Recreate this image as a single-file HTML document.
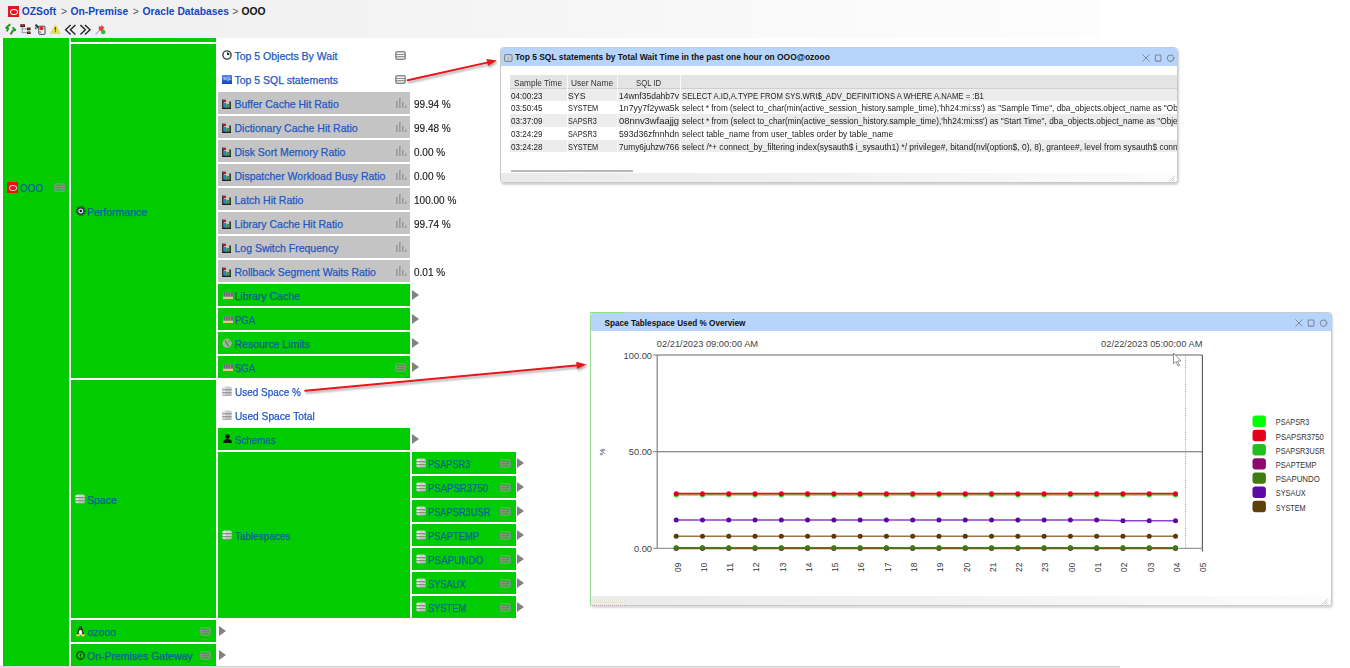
<!DOCTYPE html><html><head><meta charset="utf-8"><style>
*{margin:0;padding:0;box-sizing:border-box}
html,body{width:1350px;height:668px;overflow:hidden;background:#fff;font-family:"Liberation Sans",sans-serif}
.a{position:absolute}
.bc{font-size:10.3px;font-weight:bold;color:#1a45b5;white-space:nowrap;line-height:14px}
.sep{color:#555;font-weight:normal}
.g{background:#00cc00}
.gr{background:#c4c4c4}
.t{position:absolute;font-size:10.5px;color:#2159c4;-webkit-text-stroke:0.25px #2159c4;white-space:nowrap;line-height:22px;margin-top:1px}
.tg{position:absolute;font-size:10.5px;color:#0c6296;-webkit-text-stroke:0.25px #0c6296;white-space:nowrap;line-height:22px;margin-top:1px}
.v{position:absolute;font-size:10.5px;color:#1a1a1a;-webkit-text-stroke:0.15px #1a1a1a;white-space:nowrap;line-height:22px;margin-top:1px}
.tri{position:absolute;width:0;height:0;border-top:5.15px solid transparent;border-bottom:5.15px solid transparent;border-left:7.4px solid #828282}
svg{position:absolute;overflow:visible}
</style></head><body>
<div class="a" style="left:0;top:0;width:1102px;height:38px;background:linear-gradient(90deg,#efefef 0%,#f3f3f3 35%,#fafafa 75%,#fdfdfd 100%)"></div>
<div class="a" style="left:8px;top:6px;width:11px;height:11px;background:#e3141c"></div>
<div class="a" style="left:9.5px;top:8.5px;width:8px;height:6px;border:1.3px solid #fff;border-radius:50%"></div>
<div class="a bc" style="left:21.8px;top:4.5px;color:#1546c0;font-weight:bold">OZSoft</div>
<div class="a bc" style="left:61px;top:4.5px;color:#555;font-weight:normal">&gt;</div>
<div class="a bc" style="left:70.5px;top:4.5px;color:#1546c0;font-weight:bold">On-Premise</div>
<div class="a bc" style="left:132.8px;top:4.5px;color:#555;font-weight:normal">&gt;</div>
<div class="a bc" style="left:142.5px;top:4.5px;color:#1546c0;font-weight:bold">Oracle Databases</div>
<div class="a bc" style="left:232.2px;top:4.5px;color:#555;font-weight:normal">&gt;</div>
<div class="a bc" style="left:241.4px;top:4.5px;color:#111;font-weight:bold">OOO</div>
<svg style="left:0;top:0" width="120" height="40" viewBox="0 0 120 40"><path d="M10.3 24.2 L6.2 27.8 L8.2 28.6 L6.8 31.4" stroke="#1c951c" stroke-width="1.9" fill="none" stroke-linejoin="round"/><path d="M12.6 27.4 L15.2 30 L12.8 30.6 L10.6 34.4" stroke="#1c951c" stroke-width="1.9" fill="none" stroke-linejoin="round"/><rect x="20.2" y="24.2" width="4.8" height="2.8" rx="0.6" fill="#3a1a10"/><rect x="21.5" y="25" width="2" height="1.2" fill="#e04040"/><path d="M22.2 27 V33 M22.2 29 H27 M22.2 32.7 H27" stroke="#7a8aa0" stroke-width="0.9" fill="none"/><rect x="27" y="27.6" width="3.6" height="2.6" rx="0.5" fill="#3a1a10"/><rect x="27" y="31.4" width="3.6" height="2.6" rx="0.5" fill="#3a1a10"/><rect x="28" y="28.3" width="1.8" height="1" fill="#d04020"/><rect x="28" y="32.1" width="1.8" height="1" fill="#d04020"/><path d="M35.5 24.6 L38.5 27.8" stroke="#223040" stroke-width="2"/><rect x="35" y="27.3" width="1.6" height="2" fill="#556"/><rect x="38.8" y="26.2" width="6.2" height="8.2" rx="0.8" fill="#eef2f8" stroke="#333" stroke-width="0.9"/><circle cx="41.5" cy="28.2" r="2" fill="#e82020"/><rect x="39.6" y="31.6" width="1.3" height="1" fill="#a01070"/><path d="M55.4 24.7 L60.4 33.6 L50.4 33.6 Z" fill="#ece24a" stroke="#e0d040" stroke-width="0.5" stroke-linejoin="round"/><rect x="54.8" y="27" width="1.3" height="3.4" fill="#5a4a20"/><rect x="54.8" y="31.1" width="1.3" height="1.2" fill="#2a7a2a"/><path d="M70.6 24.9 L65.6 29.7 L70.6 34.5 M75.4 24.9 L70.4 29.7 L75.4 34.5" stroke="#222" stroke-width="1.35" fill="none"/><path d="M80.4 24.9 L85.4 29.7 L80.4 34.5 M85 24.9 L90 29.7 L85 34.5" stroke="#222" stroke-width="1.35" fill="none"/><path d="M95.6 34.2 L99.8 30.4" stroke="#aaa" stroke-width="1.1"/><path d="M98.2 29 L101.8 25.2 L104.6 27.8 L101.2 31.6 Z" fill="#ec4a4a"/><path d="M99 26.6 L103.6 31.2" stroke="#e03a3a" stroke-width="1.6"/><circle cx="103.2" cy="32" r="2.3" fill="#2dc02d"/></svg>
<div class="a g" style="left:3px;top:38px;width:66px;height:628px"></div>
<div class="a g" style="left:71px;top:38px;width:145px;height:4.4px"></div>
<div class="a g" style="left:71px;top:44px;width:145px;height:334px"></div>
<div class="a g" style="left:71px;top:380px;width:145px;height:238px"></div>
<div class="a g" style="left:71px;top:620px;width:145px;height:22px"></div>
<div class="a g" style="left:71px;top:644px;width:145px;height:22px"></div>
<div class="a" style="left:7px;top:182px;width:11px;height:11px;background:#e3141c"></div>
<div class="a" style="left:8.5px;top:184.5px;width:8px;height:6px;border:1.3px solid #f4d0d0;border-radius:50%"></div>
<div class="tg" style="left:20px;top:176px;transform:scaleX(0.946);transform-origin:0 0">OOO</div>
<svg style="left:54px;top:183px" width="11" height="9" viewBox="0 0 11 9"><rect x="0.8" y="0.8" width="9.4" height="7.4" rx="1.5" fill="none" stroke="#7a9a7a" stroke-width="1.5"/><line x1="1" y1="3.5" x2="10" y2="3.5" stroke="#7a9a7a" stroke-width="1.2"/><line x1="1" y1="5.7" x2="10" y2="5.7" stroke="#7a9a7a" stroke-width="1.2"/></svg>
<svg style="left:75.8px;top:206.2px" width="10" height="10" viewBox="0 0 10 10"><circle cx="4.8" cy="4.9" r="4.2" fill="none" stroke="#2a2a3a" stroke-width="1.4" stroke-dasharray="1.4,0.8"/><circle cx="4.8" cy="4.9" r="3.4" fill="#2a2a3a"/><circle cx="4.8" cy="4.9" r="2.5" fill="#d0d4e4"/><circle cx="4.8" cy="4.9" r="1.2" fill="#111"/></svg>
<div class="tg" style="left:87px;top:200px">Performance</div>
<svg style="left:75px;top:494px" width="10" height="10" viewBox="0 0 10 10"><rect x="0.3" y="0.6" width="9.4" height="9" rx="1.6" fill="#cfcfd2"/><rect x="0.3" y="3.2" width="9.4" height="1.1" fill="#6a8a6a"/><rect x="0.3" y="6.2" width="9.4" height="1.1" fill="#6a8a6a"/><rect x="1.2" y="1.2" width="2.2" height="1.6" fill="#f4f4f4"/><rect x="1.2" y="4.5" width="2.2" height="1.4" fill="#f0f0f0"/><rect x="1.2" y="7.5" width="2.2" height="1.4" fill="#f0f0f0"/><rect x="0.3" y="8.8" width="9.4" height="0.8" fill="#6a8a6a"/></svg>
<div class="tg" style="left:87px;top:488px">Space</div>
<svg style="left:76px;top:626px" width="9" height="11" viewBox="0 0 9 11"><path d="M4.5 0.3 C3 0.3 2.6 2 2.5 3.5 L0.8 8.5 L8.2 8.5 L6.5 3.5 C6.4 2 6 0.3 4.5 0.3 Z" fill="#222"/><ellipse cx="4.5" cy="6.4" rx="1.8" ry="2.6" fill="#f4f4f4"/><circle cx="4" cy="2" r="0.6" fill="#fff"/><ellipse cx="2" cy="9.2" rx="2" ry="1.2" fill="#f0d030"/><ellipse cx="7" cy="9.2" rx="2" ry="1.2" fill="#f0d030"/></svg>
<div class="tg" style="left:87.5px;top:620px">ozooo</div>
<svg style="left:200px;top:627px" width="11" height="9" viewBox="0 0 11 9"><rect x="0.8" y="0.8" width="9.4" height="7.4" rx="1.5" fill="none" stroke="#7a9a7a" stroke-width="1.5"/><line x1="1" y1="3.5" x2="10" y2="3.5" stroke="#7a9a7a" stroke-width="1.2"/><line x1="1" y1="5.7" x2="10" y2="5.7" stroke="#7a9a7a" stroke-width="1.2"/></svg>
<div class="tri" style="left:218.8px;top:626px"></div>
<svg style="left:76px;top:651px" width="9" height="9" viewBox="0 0 9 9"><circle cx="4.5" cy="4.5" r="3.8" fill="none" stroke="#1a2a10" stroke-width="1.2"/><rect x="4" y="2.4" width="1" height="2.8" fill="#3a3a10"/><rect x="4" y="5.8" width="1" height="1" fill="#3a3a10"/></svg>
<div class="tg" style="left:87px;top:644px">On-Premises Gateway</div>
<svg style="left:200px;top:651px" width="11" height="9" viewBox="0 0 11 9"><rect x="0.8" y="0.8" width="9.4" height="7.4" rx="1.5" fill="none" stroke="#7a9a7a" stroke-width="1.5"/><line x1="1" y1="3.5" x2="10" y2="3.5" stroke="#7a9a7a" stroke-width="1.2"/><line x1="1" y1="5.7" x2="10" y2="5.7" stroke="#7a9a7a" stroke-width="1.2"/></svg>
<div class="tri" style="left:218.8px;top:650px"></div>
<svg style="left:222px;top:50.3px" width="10" height="10" viewBox="0 0 10 10"><circle cx="5" cy="5" r="4.1" fill="#fff" stroke="#3a3a3a" stroke-width="1.35"/><path d="M5 5 V2.3 A2.7 2.7 0 0 1 7.4 5.3 Z" fill="#333"/></svg>
<div class="t" style="left:234.5px;top:44px">Top 5 Objects By Wait</div>
<svg style="left:395px;top:51px" width="11" height="9" viewBox="0 0 11 9"><rect x="0.8" y="0.8" width="9.4" height="7.4" rx="1.5" fill="none" stroke="#8c8c8c" stroke-width="1.5"/><line x1="1" y1="3.5" x2="10" y2="3.5" stroke="#8c8c8c" stroke-width="1.2"/><line x1="1" y1="5.7" x2="10" y2="5.7" stroke="#8c8c8c" stroke-width="1.2"/></svg>
<div class="a" style="left:222px;top:75px;width:10px;height:9px;background:linear-gradient(#5a8ae8,#1040c0)"></div>
<div class="a" style="left:223px;top:77px;width:8px;height:3px;font-size:4px;line-height:3px;color:#cde;font-weight:bold">SQL</div>
<div class="t" style="left:234.5px;top:68px">Top 5 SQL statements</div>
<svg style="left:395px;top:75px" width="11" height="9" viewBox="0 0 11 9"><rect x="0.8" y="0.8" width="9.4" height="7.4" rx="1.5" fill="none" stroke="#8c8c8c" stroke-width="1.5"/><line x1="1" y1="3.5" x2="10" y2="3.5" stroke="#8c8c8c" stroke-width="1.2"/><line x1="1" y1="5.7" x2="10" y2="5.7" stroke="#8c8c8c" stroke-width="1.2"/></svg>
<div class="a gr" style="left:218px;top:92px;width:192px;height:22px"></div>
<svg style="left:222px;top:99px" width="9" height="10" viewBox="0 0 9 10"><rect x="0" y="0.5" width="1.8" height="9.5" fill="#3a3a3a"/><rect x="7.2" y="2.5" width="1.8" height="7.5" fill="#3a3a3a"/><rect x="1.8" y="4" width="2.6" height="5" fill="#3a7ac8"/><rect x="4.4" y="5" width="2.8" height="4" fill="#3c9a3c"/><rect x="1.6" y="0.6" width="2.4" height="2.6" rx="1" fill="#b02020"/><rect x="0" y="8.8" width="9" height="1.2" fill="#1a1a1a"/></svg>
<div class="t" style="left:234.5px;top:92px">Buffer Cache Hit Ratio</div>
<svg style="left:396px;top:98px" width="11" height="10" viewBox="0 0 11 10"><rect x="0" y="3" width="1.6" height="7" fill="#9a9a9a"/><rect x="3" y="0" width="1.6" height="10" fill="#9a9a9a"/><rect x="6" y="4" width="1.6" height="6" fill="#9a9a9a"/><rect x="9" y="7.5" width="1.6" height="2.5" fill="#9a9a9a"/></svg>
<div class="v" style="left:413.5px;top:92px;transform:scaleX(0.954);transform-origin:0 0">99.94 %</div>
<div class="a gr" style="left:218px;top:116px;width:192px;height:22px"></div>
<svg style="left:222px;top:123px" width="9" height="10" viewBox="0 0 9 10"><rect x="0" y="0.5" width="1.8" height="9.5" fill="#3a3a3a"/><rect x="7.2" y="2.5" width="1.8" height="7.5" fill="#3a3a3a"/><rect x="1.8" y="4" width="2.6" height="5" fill="#3a7ac8"/><rect x="4.4" y="5" width="2.8" height="4" fill="#3c9a3c"/><rect x="1.6" y="0.6" width="2.4" height="2.6" rx="1" fill="#b02020"/><rect x="0" y="8.8" width="9" height="1.2" fill="#1a1a1a"/></svg>
<div class="t" style="left:234.5px;top:116px">Dictionary Cache Hit Ratio</div>
<svg style="left:396px;top:122px" width="11" height="10" viewBox="0 0 11 10"><rect x="0" y="3" width="1.6" height="7" fill="#9a9a9a"/><rect x="3" y="0" width="1.6" height="10" fill="#9a9a9a"/><rect x="6" y="4" width="1.6" height="6" fill="#9a9a9a"/><rect x="9" y="7.5" width="1.6" height="2.5" fill="#9a9a9a"/></svg>
<div class="v" style="left:413.5px;top:116px;transform:scaleX(0.954);transform-origin:0 0">99.48 %</div>
<div class="a gr" style="left:218px;top:140px;width:192px;height:22px"></div>
<svg style="left:222px;top:147px" width="9" height="10" viewBox="0 0 9 10"><rect x="0" y="0.5" width="1.8" height="9.5" fill="#3a3a3a"/><rect x="7.2" y="2.5" width="1.8" height="7.5" fill="#3a3a3a"/><rect x="1.8" y="4" width="2.6" height="5" fill="#3a7ac8"/><rect x="4.4" y="5" width="2.8" height="4" fill="#3c9a3c"/><rect x="1.6" y="0.6" width="2.4" height="2.6" rx="1" fill="#b02020"/><rect x="0" y="8.8" width="9" height="1.2" fill="#1a1a1a"/></svg>
<div class="t" style="left:234.5px;top:140px">Disk Sort Memory Ratio</div>
<svg style="left:396px;top:146px" width="11" height="10" viewBox="0 0 11 10"><rect x="0" y="3" width="1.6" height="7" fill="#9a9a9a"/><rect x="3" y="0" width="1.6" height="10" fill="#9a9a9a"/><rect x="6" y="4" width="1.6" height="6" fill="#9a9a9a"/><rect x="9" y="7.5" width="1.6" height="2.5" fill="#9a9a9a"/></svg>
<div class="v" style="left:413.5px;top:140px;transform:scaleX(0.954);transform-origin:0 0">0.00 %</div>
<div class="a gr" style="left:218px;top:164px;width:192px;height:22px"></div>
<svg style="left:222px;top:171px" width="9" height="10" viewBox="0 0 9 10"><rect x="0" y="0.5" width="1.8" height="9.5" fill="#3a3a3a"/><rect x="7.2" y="2.5" width="1.8" height="7.5" fill="#3a3a3a"/><rect x="1.8" y="4" width="2.6" height="5" fill="#3a7ac8"/><rect x="4.4" y="5" width="2.8" height="4" fill="#3c9a3c"/><rect x="1.6" y="0.6" width="2.4" height="2.6" rx="1" fill="#b02020"/><rect x="0" y="8.8" width="9" height="1.2" fill="#1a1a1a"/></svg>
<div class="t" style="left:234.5px;top:164px">Dispatcher Workload Busy Ratio</div>
<svg style="left:396px;top:170px" width="11" height="10" viewBox="0 0 11 10"><rect x="0" y="3" width="1.6" height="7" fill="#9a9a9a"/><rect x="3" y="0" width="1.6" height="10" fill="#9a9a9a"/><rect x="6" y="4" width="1.6" height="6" fill="#9a9a9a"/><rect x="9" y="7.5" width="1.6" height="2.5" fill="#9a9a9a"/></svg>
<div class="v" style="left:413.5px;top:164px;transform:scaleX(0.954);transform-origin:0 0">0.00 %</div>
<div class="a gr" style="left:218px;top:188px;width:192px;height:22px"></div>
<svg style="left:222px;top:195px" width="9" height="10" viewBox="0 0 9 10"><rect x="0" y="0.5" width="1.8" height="9.5" fill="#3a3a3a"/><rect x="7.2" y="2.5" width="1.8" height="7.5" fill="#3a3a3a"/><rect x="1.8" y="4" width="2.6" height="5" fill="#3a7ac8"/><rect x="4.4" y="5" width="2.8" height="4" fill="#3c9a3c"/><rect x="1.6" y="0.6" width="2.4" height="2.6" rx="1" fill="#b02020"/><rect x="0" y="8.8" width="9" height="1.2" fill="#1a1a1a"/></svg>
<div class="t" style="left:234.5px;top:188px">Latch Hit Ratio</div>
<svg style="left:396px;top:194px" width="11" height="10" viewBox="0 0 11 10"><rect x="0" y="3" width="1.6" height="7" fill="#9a9a9a"/><rect x="3" y="0" width="1.6" height="10" fill="#9a9a9a"/><rect x="6" y="4" width="1.6" height="6" fill="#9a9a9a"/><rect x="9" y="7.5" width="1.6" height="2.5" fill="#9a9a9a"/></svg>
<div class="v" style="left:413.5px;top:188px;transform:scaleX(0.954);transform-origin:0 0">100.00 %</div>
<div class="a gr" style="left:218px;top:212px;width:192px;height:22px"></div>
<svg style="left:222px;top:219px" width="9" height="10" viewBox="0 0 9 10"><rect x="0" y="0.5" width="1.8" height="9.5" fill="#3a3a3a"/><rect x="7.2" y="2.5" width="1.8" height="7.5" fill="#3a3a3a"/><rect x="1.8" y="4" width="2.6" height="5" fill="#3a7ac8"/><rect x="4.4" y="5" width="2.8" height="4" fill="#3c9a3c"/><rect x="1.6" y="0.6" width="2.4" height="2.6" rx="1" fill="#b02020"/><rect x="0" y="8.8" width="9" height="1.2" fill="#1a1a1a"/></svg>
<div class="t" style="left:234.5px;top:212px">Library Cache Hit Ratio</div>
<svg style="left:396px;top:218px" width="11" height="10" viewBox="0 0 11 10"><rect x="0" y="3" width="1.6" height="7" fill="#9a9a9a"/><rect x="3" y="0" width="1.6" height="10" fill="#9a9a9a"/><rect x="6" y="4" width="1.6" height="6" fill="#9a9a9a"/><rect x="9" y="7.5" width="1.6" height="2.5" fill="#9a9a9a"/></svg>
<div class="v" style="left:413.5px;top:212px;transform:scaleX(0.954);transform-origin:0 0">99.74 %</div>
<div class="a gr" style="left:218px;top:236px;width:192px;height:22px"></div>
<svg style="left:222px;top:243px" width="9" height="10" viewBox="0 0 9 10"><rect x="0" y="0.5" width="1.8" height="9.5" fill="#3a3a3a"/><rect x="7.2" y="2.5" width="1.8" height="7.5" fill="#3a3a3a"/><rect x="1.8" y="4" width="2.6" height="5" fill="#3a7ac8"/><rect x="4.4" y="5" width="2.8" height="4" fill="#3c9a3c"/><rect x="1.6" y="0.6" width="2.4" height="2.6" rx="1" fill="#b02020"/><rect x="0" y="8.8" width="9" height="1.2" fill="#1a1a1a"/></svg>
<div class="t" style="left:234.5px;top:236px">Log Switch Frequency</div>
<svg style="left:396px;top:242px" width="11" height="10" viewBox="0 0 11 10"><rect x="0" y="3" width="1.6" height="7" fill="#9a9a9a"/><rect x="3" y="0" width="1.6" height="10" fill="#9a9a9a"/><rect x="6" y="4" width="1.6" height="6" fill="#9a9a9a"/><rect x="9" y="7.5" width="1.6" height="2.5" fill="#9a9a9a"/></svg>
<div class="a gr" style="left:218px;top:260px;width:192px;height:22px"></div>
<svg style="left:222px;top:267px" width="9" height="10" viewBox="0 0 9 10"><rect x="0" y="0.5" width="1.8" height="9.5" fill="#3a3a3a"/><rect x="7.2" y="2.5" width="1.8" height="7.5" fill="#3a3a3a"/><rect x="1.8" y="4" width="2.6" height="5" fill="#3a7ac8"/><rect x="4.4" y="5" width="2.8" height="4" fill="#3c9a3c"/><rect x="1.6" y="0.6" width="2.4" height="2.6" rx="1" fill="#b02020"/><rect x="0" y="8.8" width="9" height="1.2" fill="#1a1a1a"/></svg>
<div class="t" style="left:234.5px;top:260px">Rollback Segment Waits Ratio</div>
<svg style="left:396px;top:266px" width="11" height="10" viewBox="0 0 11 10"><rect x="0" y="3" width="1.6" height="7" fill="#9a9a9a"/><rect x="3" y="0" width="1.6" height="10" fill="#9a9a9a"/><rect x="6" y="4" width="1.6" height="6" fill="#9a9a9a"/><rect x="9" y="7.5" width="1.6" height="2.5" fill="#9a9a9a"/></svg>
<div class="v" style="left:413.5px;top:260px;transform:scaleX(0.954);transform-origin:0 0">0.01 %</div>
<div class="a g" style="left:218px;top:284px;width:192px;height:22px"></div>
<svg style="left:222.8px;top:292px" width="10" height="7" viewBox="0 0 10 7"><rect x="0" y="0.5" width="10" height="4.5" fill="#a8a080"/><rect x="0.6" y="0.5" width="1.7" height="4" fill="#6a5a90"/><rect x="3.1" y="0.5" width="1.7" height="4" fill="#6a5a90"/><rect x="5.6" y="0.5" width="1.7" height="4" fill="#6a5a90"/><rect x="8.1" y="0.5" width="1.7" height="4" fill="#6a5a90"/><rect x="0" y="5" width="10" height="2" fill="#e6c98a"/></svg>
<div class="tg" style="left:234.5px;top:284px">Library Cache</div>
<div class="tri" style="left:411.9px;top:290px"></div>
<div class="a g" style="left:218px;top:308px;width:192px;height:22px"></div>
<svg style="left:222.8px;top:316px" width="10" height="7" viewBox="0 0 10 7"><rect x="0" y="0.5" width="10" height="4.5" fill="#a8a080"/><rect x="0.6" y="0.5" width="1.7" height="4" fill="#6a5a90"/><rect x="3.1" y="0.5" width="1.7" height="4" fill="#6a5a90"/><rect x="5.6" y="0.5" width="1.7" height="4" fill="#6a5a90"/><rect x="8.1" y="0.5" width="1.7" height="4" fill="#6a5a90"/><rect x="0" y="5" width="10" height="2" fill="#e6c98a"/></svg>
<div class="tg" style="left:234.5px;top:308px;transform:scaleX(0.9);transform-origin:0 0">PGA</div>
<div class="tri" style="left:411.9px;top:314px"></div>
<div class="a g" style="left:218px;top:332px;width:192px;height:22px"></div>
<svg style="left:222.3px;top:338px" width="10" height="10.5" viewBox="0 0 10 10.5"><circle cx="5" cy="5.2" r="4.7" fill="#b4a4b8"/><path d="M3.2 1.6 C4.6 2.2 3.8 3.6 5.2 4.2 C6.2 4.6 5.6 6.2 7 7 C7.6 7.4 7.2 8.4 6.4 8.8 C5.4 8 4.4 7.2 4.6 6.2 C3.6 5.6 2.4 4.8 2.8 3.6 Z" fill="#20c020"/><circle cx="7.4" cy="3" r="0.9" fill="#20c020"/></svg>
<div class="tg" style="left:234.5px;top:332px">Resource Limits</div>
<div class="tri" style="left:411.9px;top:338px"></div>
<div class="a g" style="left:218px;top:356px;width:192px;height:22px"></div>
<svg style="left:222.8px;top:364px" width="10" height="7" viewBox="0 0 10 7"><rect x="0" y="0.5" width="10" height="4.5" fill="#a8a080"/><rect x="0.6" y="0.5" width="1.7" height="4" fill="#6a5a90"/><rect x="3.1" y="0.5" width="1.7" height="4" fill="#6a5a90"/><rect x="5.6" y="0.5" width="1.7" height="4" fill="#6a5a90"/><rect x="8.1" y="0.5" width="1.7" height="4" fill="#6a5a90"/><rect x="0" y="5" width="10" height="2" fill="#e6c98a"/></svg>
<div class="tg" style="left:234.5px;top:356px;transform:scaleX(0.9);transform-origin:0 0">SGA</div>
<svg style="left:395px;top:363px" width="11" height="9" viewBox="0 0 11 9"><rect x="0.8" y="0.8" width="9.4" height="7.4" rx="1.5" fill="none" stroke="#7a9a7a" stroke-width="1.5"/><line x1="1" y1="3.5" x2="10" y2="3.5" stroke="#7a9a7a" stroke-width="1.2"/><line x1="1" y1="5.7" x2="10" y2="5.7" stroke="#7a9a7a" stroke-width="1.2"/></svg>
<div class="tri" style="left:411.9px;top:362px"></div>
<svg style="left:222px;top:386px" width="10" height="10" viewBox="0 0 10 10"><rect x="0.3" y="0.6" width="9.4" height="9" rx="1.6" fill="#cfcfd2"/><rect x="0.3" y="3.2" width="9.4" height="1.1" fill="#8a8a8a"/><rect x="0.3" y="6.2" width="9.4" height="1.1" fill="#8a8a8a"/><rect x="1.2" y="1.2" width="2.2" height="1.6" fill="#f4f4f4"/><rect x="1.2" y="4.5" width="2.2" height="1.4" fill="#f0f0f0"/><rect x="1.2" y="7.5" width="2.2" height="1.4" fill="#f0f0f0"/><rect x="0.3" y="8.8" width="9.4" height="0.8" fill="#8a8a8a"/></svg>
<div class="t" style="left:234.5px;top:380px;transform:scaleX(0.948);transform-origin:0 0">Used Space %</div>
<svg style="left:222px;top:410px" width="10" height="10" viewBox="0 0 10 10"><rect x="0.3" y="0.6" width="9.4" height="9" rx="1.6" fill="#cfcfd2"/><rect x="0.3" y="3.2" width="9.4" height="1.1" fill="#8a8a8a"/><rect x="0.3" y="6.2" width="9.4" height="1.1" fill="#8a8a8a"/><rect x="1.2" y="1.2" width="2.2" height="1.6" fill="#f4f4f4"/><rect x="1.2" y="4.5" width="2.2" height="1.4" fill="#f0f0f0"/><rect x="1.2" y="7.5" width="2.2" height="1.4" fill="#f0f0f0"/><rect x="0.3" y="8.8" width="9.4" height="0.8" fill="#8a8a8a"/></svg>
<div class="t" style="left:234.5px;top:404px;transform:scaleX(0.97);transform-origin:0 0">Used Space Total</div>
<div class="a g" style="left:218px;top:428px;width:192px;height:22px"></div>
<svg style="left:223px;top:434px" width="9" height="9" viewBox="0 0 9 9"><circle cx="4.5" cy="2.5" r="2.3" fill="#111"/><path d="M0 9 Q0 5 4.5 5 Q9 5 9 9 Z" fill="#111"/></svg>
<div class="tg" style="left:234.5px;top:428px;transform:scaleX(0.925);transform-origin:0 0">Schemas</div>
<div class="tri" style="left:411.9px;top:434px"></div>
<div class="a g" style="left:218px;top:452px;width:192px;height:166px"></div>
<svg style="left:222px;top:530px" width="10" height="10" viewBox="0 0 10 10"><rect x="0.3" y="0.6" width="9.4" height="9" rx="1.6" fill="#cfcfd2"/><rect x="0.3" y="3.2" width="9.4" height="1.1" fill="#6a8a6a"/><rect x="0.3" y="6.2" width="9.4" height="1.1" fill="#6a8a6a"/><rect x="1.2" y="1.2" width="2.2" height="1.6" fill="#f4f4f4"/><rect x="1.2" y="4.5" width="2.2" height="1.4" fill="#f0f0f0"/><rect x="1.2" y="7.5" width="2.2" height="1.4" fill="#f0f0f0"/><rect x="0.3" y="8.8" width="9.4" height="0.8" fill="#6a8a6a"/></svg>
<div class="tg" style="left:234.8px;top:524px;transform:scaleX(0.95);transform-origin:0 0">Tablespaces</div>
<div class="a g" style="left:412px;top:452px;width:104px;height:22px"></div>
<svg style="left:416px;top:458px" width="10" height="10" viewBox="0 0 10 10"><rect x="0.3" y="0.6" width="9.4" height="9" rx="1.6" fill="#cfcfd2"/><rect x="0.3" y="3.2" width="9.4" height="1.1" fill="#6a8a6a"/><rect x="0.3" y="6.2" width="9.4" height="1.1" fill="#6a8a6a"/><rect x="1.2" y="1.2" width="2.2" height="1.6" fill="#f4f4f4"/><rect x="1.2" y="4.5" width="2.2" height="1.4" fill="#f0f0f0"/><rect x="1.2" y="7.5" width="2.2" height="1.4" fill="#f0f0f0"/><rect x="0.3" y="8.8" width="9.4" height="0.8" fill="#6a8a6a"/></svg>
<div class="tg" style="left:428.3px;top:452px;transform:scaleX(0.872);transform-origin:0 0">PSAPSR3</div>
<svg style="left:500px;top:459px" width="11" height="9" viewBox="0 0 11 9"><rect x="0.8" y="0.8" width="9.4" height="7.4" rx="1.5" fill="none" stroke="#7a9a7a" stroke-width="1.5"/><line x1="1" y1="3.5" x2="10" y2="3.5" stroke="#7a9a7a" stroke-width="1.2"/><line x1="1" y1="5.7" x2="10" y2="5.7" stroke="#7a9a7a" stroke-width="1.2"/></svg>
<div class="tri" style="left:517.2px;top:458px"></div>
<div class="a g" style="left:412px;top:476px;width:104px;height:22px"></div>
<svg style="left:416px;top:482px" width="10" height="10" viewBox="0 0 10 10"><rect x="0.3" y="0.6" width="9.4" height="9" rx="1.6" fill="#cfcfd2"/><rect x="0.3" y="3.2" width="9.4" height="1.1" fill="#6a8a6a"/><rect x="0.3" y="6.2" width="9.4" height="1.1" fill="#6a8a6a"/><rect x="1.2" y="1.2" width="2.2" height="1.6" fill="#f4f4f4"/><rect x="1.2" y="4.5" width="2.2" height="1.4" fill="#f0f0f0"/><rect x="1.2" y="7.5" width="2.2" height="1.4" fill="#f0f0f0"/><rect x="0.3" y="8.8" width="9.4" height="0.8" fill="#6a8a6a"/></svg>
<div class="tg" style="left:428.3px;top:476px;transform:scaleX(0.91);transform-origin:0 0">PSAPSR3750</div>
<svg style="left:500px;top:483px" width="11" height="9" viewBox="0 0 11 9"><rect x="0.8" y="0.8" width="9.4" height="7.4" rx="1.5" fill="none" stroke="#7a9a7a" stroke-width="1.5"/><line x1="1" y1="3.5" x2="10" y2="3.5" stroke="#7a9a7a" stroke-width="1.2"/><line x1="1" y1="5.7" x2="10" y2="5.7" stroke="#7a9a7a" stroke-width="1.2"/></svg>
<div class="tri" style="left:517.2px;top:482px"></div>
<div class="a g" style="left:412px;top:500px;width:104px;height:22px"></div>
<svg style="left:416px;top:506px" width="10" height="10" viewBox="0 0 10 10"><rect x="0.3" y="0.6" width="9.4" height="9" rx="1.6" fill="#cfcfd2"/><rect x="0.3" y="3.2" width="9.4" height="1.1" fill="#6a8a6a"/><rect x="0.3" y="6.2" width="9.4" height="1.1" fill="#6a8a6a"/><rect x="1.2" y="1.2" width="2.2" height="1.6" fill="#f4f4f4"/><rect x="1.2" y="4.5" width="2.2" height="1.4" fill="#f0f0f0"/><rect x="1.2" y="7.5" width="2.2" height="1.4" fill="#f0f0f0"/><rect x="0.3" y="8.8" width="9.4" height="0.8" fill="#6a8a6a"/></svg>
<div class="tg" style="left:428.3px;top:500px;transform:scaleX(0.883);transform-origin:0 0">PSAPSR3USR</div>
<svg style="left:500px;top:507px" width="11" height="9" viewBox="0 0 11 9"><rect x="0.8" y="0.8" width="9.4" height="7.4" rx="1.5" fill="none" stroke="#7a9a7a" stroke-width="1.5"/><line x1="1" y1="3.5" x2="10" y2="3.5" stroke="#7a9a7a" stroke-width="1.2"/><line x1="1" y1="5.7" x2="10" y2="5.7" stroke="#7a9a7a" stroke-width="1.2"/></svg>
<div class="tri" style="left:517.2px;top:506px"></div>
<div class="a g" style="left:412px;top:524px;width:104px;height:22px"></div>
<svg style="left:416px;top:530px" width="10" height="10" viewBox="0 0 10 10"><rect x="0.3" y="0.6" width="9.4" height="9" rx="1.6" fill="#cfcfd2"/><rect x="0.3" y="3.2" width="9.4" height="1.1" fill="#6a8a6a"/><rect x="0.3" y="6.2" width="9.4" height="1.1" fill="#6a8a6a"/><rect x="1.2" y="1.2" width="2.2" height="1.6" fill="#f4f4f4"/><rect x="1.2" y="4.5" width="2.2" height="1.4" fill="#f0f0f0"/><rect x="1.2" y="7.5" width="2.2" height="1.4" fill="#f0f0f0"/><rect x="0.3" y="8.8" width="9.4" height="0.8" fill="#6a8a6a"/></svg>
<div class="tg" style="left:428.3px;top:524px;transform:scaleX(0.894);transform-origin:0 0">PSAPTEMP</div>
<svg style="left:500px;top:531px" width="11" height="9" viewBox="0 0 11 9"><rect x="0.8" y="0.8" width="9.4" height="7.4" rx="1.5" fill="none" stroke="#7a9a7a" stroke-width="1.5"/><line x1="1" y1="3.5" x2="10" y2="3.5" stroke="#7a9a7a" stroke-width="1.2"/><line x1="1" y1="5.7" x2="10" y2="5.7" stroke="#7a9a7a" stroke-width="1.2"/></svg>
<div class="tri" style="left:517.2px;top:530px"></div>
<div class="a g" style="left:412px;top:548px;width:104px;height:22px"></div>
<svg style="left:416px;top:554px" width="10" height="10" viewBox="0 0 10 10"><rect x="0.3" y="0.6" width="9.4" height="9" rx="1.6" fill="#cfcfd2"/><rect x="0.3" y="3.2" width="9.4" height="1.1" fill="#6a8a6a"/><rect x="0.3" y="6.2" width="9.4" height="1.1" fill="#6a8a6a"/><rect x="1.2" y="1.2" width="2.2" height="1.6" fill="#f4f4f4"/><rect x="1.2" y="4.5" width="2.2" height="1.4" fill="#f0f0f0"/><rect x="1.2" y="7.5" width="2.2" height="1.4" fill="#f0f0f0"/><rect x="0.3" y="8.8" width="9.4" height="0.8" fill="#6a8a6a"/></svg>
<div class="tg" style="left:428.3px;top:548px;transform:scaleX(0.94);transform-origin:0 0">PSAPUNDO</div>
<svg style="left:500px;top:555px" width="11" height="9" viewBox="0 0 11 9"><rect x="0.8" y="0.8" width="9.4" height="7.4" rx="1.5" fill="none" stroke="#7a9a7a" stroke-width="1.5"/><line x1="1" y1="3.5" x2="10" y2="3.5" stroke="#7a9a7a" stroke-width="1.2"/><line x1="1" y1="5.7" x2="10" y2="5.7" stroke="#7a9a7a" stroke-width="1.2"/></svg>
<div class="tri" style="left:517.2px;top:554px"></div>
<div class="a g" style="left:412px;top:572px;width:104px;height:22px"></div>
<svg style="left:416px;top:578px" width="10" height="10" viewBox="0 0 10 10"><rect x="0.3" y="0.6" width="9.4" height="9" rx="1.6" fill="#cfcfd2"/><rect x="0.3" y="3.2" width="9.4" height="1.1" fill="#6a8a6a"/><rect x="0.3" y="6.2" width="9.4" height="1.1" fill="#6a8a6a"/><rect x="1.2" y="1.2" width="2.2" height="1.6" fill="#f4f4f4"/><rect x="1.2" y="4.5" width="2.2" height="1.4" fill="#f0f0f0"/><rect x="1.2" y="7.5" width="2.2" height="1.4" fill="#f0f0f0"/><rect x="0.3" y="8.8" width="9.4" height="0.8" fill="#6a8a6a"/></svg>
<div class="tg" style="left:428.3px;top:572px;transform:scaleX(0.883);transform-origin:0 0">SYSAUX</div>
<svg style="left:500px;top:579px" width="11" height="9" viewBox="0 0 11 9"><rect x="0.8" y="0.8" width="9.4" height="7.4" rx="1.5" fill="none" stroke="#7a9a7a" stroke-width="1.5"/><line x1="1" y1="3.5" x2="10" y2="3.5" stroke="#7a9a7a" stroke-width="1.2"/><line x1="1" y1="5.7" x2="10" y2="5.7" stroke="#7a9a7a" stroke-width="1.2"/></svg>
<div class="tri" style="left:517.2px;top:578px"></div>
<div class="a g" style="left:412px;top:596px;width:104px;height:22px"></div>
<svg style="left:416px;top:602px" width="10" height="10" viewBox="0 0 10 10"><rect x="0.3" y="0.6" width="9.4" height="9" rx="1.6" fill="#cfcfd2"/><rect x="0.3" y="3.2" width="9.4" height="1.1" fill="#6a8a6a"/><rect x="0.3" y="6.2" width="9.4" height="1.1" fill="#6a8a6a"/><rect x="1.2" y="1.2" width="2.2" height="1.6" fill="#f4f4f4"/><rect x="1.2" y="4.5" width="2.2" height="1.4" fill="#f0f0f0"/><rect x="1.2" y="7.5" width="2.2" height="1.4" fill="#f0f0f0"/><rect x="0.3" y="8.8" width="9.4" height="0.8" fill="#6a8a6a"/></svg>
<div class="tg" style="left:428.3px;top:596px;transform:scaleX(0.883);transform-origin:0 0">SYSTEM</div>
<svg style="left:500px;top:603px" width="11" height="9" viewBox="0 0 11 9"><rect x="0.8" y="0.8" width="9.4" height="7.4" rx="1.5" fill="none" stroke="#7a9a7a" stroke-width="1.5"/><line x1="1" y1="3.5" x2="10" y2="3.5" stroke="#7a9a7a" stroke-width="1.2"/><line x1="1" y1="5.7" x2="10" y2="5.7" stroke="#7a9a7a" stroke-width="1.2"/></svg>
<div class="tri" style="left:517.2px;top:602px"></div>
<div class="a" style="left:500px;top:46.7px;width:677.5px;height:136.8px;border:1.2px solid #c9c9c9;border-radius:4px;background:#fff;box-shadow:1px 2px 2px rgba(0,0,0,0.18);overflow:hidden"><div class="a" style="left:0;top:0;width:100%;height:18px;background:#b7d5fa"></div><div class="a" style="left:0;top:125.8px;width:100%;height:9px;background:linear-gradient(90deg,#eaeaea,#f2f2f2 50%,#fcfcfc)"></div></div>
<svg style="left:503.6px;top:53.8px" width="8.6" height="8" viewBox="0 0 8.6 8"><rect x="0.6" y="0.6" width="7.4" height="6.8" rx="1.3" fill="#dfe6f0" stroke="#7f858e" stroke-width="1.1"/><path d="M1 3 H7.6 M1 5 H7.6 M4.3 3 V7" stroke="#9aa2ad" stroke-width="0.7"/></svg>
<div class="a" style="left:515px;top:51px;font-size:8.45px;font-weight:bold;color:#111;white-space:nowrap;line-height:12px">Top 5 SQL statements by Total Wait Time in the past one hour on OOO@ozooo</div>
<svg style="left:1142px;top:53.6px" width="34" height="9" viewBox="0 0 34 9"><path d="M0.4 0.4 L7.6 7.6 M7.6 0.4 L0.4 7.6" stroke="#7d8898" stroke-width="0.95"/><rect x="13.3" y="0.9" width="5.6" height="6.2" rx="0.6" fill="none" stroke="#7d8898" stroke-width="1.05"/><path d="M31.3 2.6 A3.2 3.2 0 1 0 31.6 4.9" stroke="#7d8898" stroke-width="1.05" fill="none"/><path d="M30.2 3.3 L33 3.3 L31.6 5.6 Z" fill="#7d8898"/></svg>
<div class="a" style="left:510px;top:75px;width:667px;height:13.6px;background:#e4e4e4;border-bottom:1px solid #cfcfcf"></div>
<div class="a" style="left:566.5px;top:75px;width:1.2px;height:13.6px;background:#fafafa"></div>
<div class="a" style="left:617px;top:75px;width:1.2px;height:13.6px;background:#fafafa"></div>
<div class="a" style="left:680px;top:75px;width:1.2px;height:13.6px;background:#fafafa"></div>
<div class="a" style="left:0;top:0;width:1177.3px;height:200px;overflow:hidden">
<div class="a" style="left:514.25px;top:76.39999999999999px;font-size:9.6px;color:#333;white-space:nowrap;line-height:13px;transform:scaleX(0.8581);transform-origin:0 0">Sample Time</div>
<div class="a" style="left:571.25px;top:76.39999999999999px;font-size:9.6px;color:#333;white-space:nowrap;line-height:13px;transform:scaleX(0.8665);transform-origin:0 0">User Name</div>
<div class="a" style="left:636.4px;top:76.39999999999999px;font-size:9.6px;color:#333;white-space:nowrap;line-height:13px;transform:scaleX(0.8100);transform-origin:0 0">SQL ID</div>
<div class="a" style="left:510px;top:88.7px;width:667px;height:12.75px;background:#ececec"></div>
<div class="a" style="left:566.5px;top:88.7px;width:1.2px;height:12.75px;background:#fbfbfb"></div>
<div class="a" style="left:617px;top:88.7px;width:1.2px;height:12.75px;background:#fbfbfb"></div>
<div class="a" style="left:680px;top:88.7px;width:1.2px;height:12.75px;background:#fbfbfb"></div>
<div class="a" style="left:510.5px;top:89.5px;font-size:9.6px;color:#222;white-space:nowrap;line-height:12.75px;transform:scaleX(0.8415);transform-origin:0 0">04:00:23</div>
<div class="a" style="left:567.8px;top:89.5px;font-size:9.6px;color:#222;white-space:nowrap;line-height:12.75px;transform:scaleX(0.9106);transform-origin:0 0">SYS</div>
<div class="a" style="left:618.6px;top:89.5px;font-size:9.6px;color:#222;white-space:nowrap;line-height:12.75px;transform:scaleX(0.8866);transform-origin:0 0">14wnf35dahb7v</div>
<div class="a" style="left:681.6px;top:89.5px;font-size:9.6px;color:#222;white-space:nowrap;line-height:12.75px;transform:scaleX(0.8029);transform-origin:0 0">SELECT A.ID,A.TYPE FROM SYS.WRI$_ADV_DEFINITIONS A WHERE A.NAME = :B1</div>
<div class="a" style="left:510.5px;top:102.25px;font-size:9.6px;color:#222;white-space:nowrap;line-height:12.75px;transform:scaleX(0.8415);transform-origin:0 0">03:50:45</div>
<div class="a" style="left:567.8px;top:102.25px;font-size:9.6px;color:#222;white-space:nowrap;line-height:12.75px;transform:scaleX(0.7652);transform-origin:0 0">SYSTEM</div>
<div class="a" style="left:618.6px;top:102.25px;font-size:9.6px;color:#222;white-space:nowrap;line-height:12.75px;transform:scaleX(0.9080);transform-origin:0 0">1n7yy7f2ywa5k</div>
<div class="a" style="left:681.6px;top:102.25px;font-size:9.6px;color:#222;white-space:nowrap;line-height:12.75px;transform:scaleX(0.8587);transform-origin:0 0">select * from (select to_char(min(active_session_history.sample_time),'hh24:mi:ss') as "Sample Time", dba_objects.object_name as "Ob</div>
<div class="a" style="left:510px;top:114.2px;width:667px;height:12.75px;background:#ececec"></div>
<div class="a" style="left:566.5px;top:114.2px;width:1.2px;height:12.75px;background:#fbfbfb"></div>
<div class="a" style="left:617px;top:114.2px;width:1.2px;height:12.75px;background:#fbfbfb"></div>
<div class="a" style="left:680px;top:114.2px;width:1.2px;height:12.75px;background:#fbfbfb"></div>
<div class="a" style="left:510.5px;top:115.0px;font-size:9.6px;color:#222;white-space:nowrap;line-height:12.75px;transform:scaleX(0.8415);transform-origin:0 0">03:37:09</div>
<div class="a" style="left:567.8px;top:115.0px;font-size:9.6px;color:#222;white-space:nowrap;line-height:12.75px;transform:scaleX(0.7604);transform-origin:0 0">SAPSR3</div>
<div class="a" style="left:618.6px;top:115.0px;font-size:9.6px;color:#222;white-space:nowrap;line-height:12.75px;transform:scaleX(0.9793);transform-origin:0 0">08nnv3wfaajjg</div>
<div class="a" style="left:681.6px;top:115.0px;font-size:9.6px;color:#222;white-space:nowrap;line-height:12.75px;transform:scaleX(0.8659);transform-origin:0 0">select * from (select to_char(min(active_session_history.sample_time),'hh24:mi:ss') as "Start Time", dba_objects.object_name as "Obje</div>
<div class="a" style="left:510.5px;top:127.75px;font-size:9.6px;color:#222;white-space:nowrap;line-height:12.75px;transform:scaleX(0.8415);transform-origin:0 0">03:24:29</div>
<div class="a" style="left:567.8px;top:127.75px;font-size:9.6px;color:#222;white-space:nowrap;line-height:12.75px;transform:scaleX(0.7604);transform-origin:0 0">SAPSR3</div>
<div class="a" style="left:618.6px;top:127.75px;font-size:9.6px;color:#222;white-space:nowrap;line-height:12.75px;transform:scaleX(0.9080);transform-origin:0 0">593d36zfnnhdn</div>
<div class="a" style="left:681.6px;top:127.75px;font-size:9.6px;color:#222;white-space:nowrap;line-height:12.75px;transform:scaleX(0.8703);transform-origin:0 0">select table_name from user_tables order by table_name</div>
<div class="a" style="left:510px;top:139.7px;width:667px;height:12.75px;background:#ececec"></div>
<div class="a" style="left:566.5px;top:139.7px;width:1.2px;height:12.75px;background:#fbfbfb"></div>
<div class="a" style="left:617px;top:139.7px;width:1.2px;height:12.75px;background:#fbfbfb"></div>
<div class="a" style="left:680px;top:139.7px;width:1.2px;height:12.75px;background:#fbfbfb"></div>
<div class="a" style="left:510.5px;top:140.5px;font-size:9.6px;color:#222;white-space:nowrap;line-height:12.75px;transform:scaleX(0.8415);transform-origin:0 0">03:24:28</div>
<div class="a" style="left:567.8px;top:140.5px;font-size:9.6px;color:#222;white-space:nowrap;line-height:12.75px;transform:scaleX(0.7652);transform-origin:0 0">SYSTEM</div>
<div class="a" style="left:618.6px;top:140.5px;font-size:9.6px;color:#222;white-space:nowrap;line-height:12.75px;transform:scaleX(0.8664);transform-origin:0 0">7umy6juhzw766</div>
<div class="a" style="left:681.6px;top:140.5px;font-size:9.6px;color:#222;white-space:nowrap;line-height:12.75px;transform:scaleX(0.8799);transform-origin:0 0">select /*+ connect_by_filtering index(sysauth$ i_sysauth1) */ privilege#, bitand(nvl(option$, 0), 8), grantee#, level from sysauth$ conn</div>
</div>
<div class="a" style="left:510.5px;top:170px;width:122px;height:1.8px;background:#b9b9b9"></div>
<svg style="left:1168px;top:175px" width="7" height="7" viewBox="0 0 7 7"><path d="M6.5 1 L1 6.5 M6.5 3.5 L3.5 6.5 M6.5 5.5 L5.5 6.5" stroke="#bbb" stroke-width="0.8"/></svg>
<div class="a" style="left:590px;top:312.1px;width:741.5px;height:293.6px;border:1.2px solid #cacaca;border-left:1.2px solid #98de98;border-radius:4px 4px 3px 3px;background:#fff;box-shadow:1px 2px 2px rgba(0,0,0,0.15);overflow:hidden"><div class="a" style="left:0;top:0;width:100%;height:18px;background:#b7d5fa"></div><div class="a" style="left:0;top:283.2px;width:100%;height:9px;background:linear-gradient(90deg,#eaeaea,#f2f2f2 50%,#fcfcfc)"></div></div>
<div class="a" style="left:590px;top:312.1px;width:35px;height:1.2px;background:#8adf8a"></div>
<div class="a" style="left:590px;top:604.6px;width:35px;height:1.2px;background:repeating-linear-gradient(90deg,#7ad67a 0 1px,#d8f4d8 1px 2px)"></div>
<div class="a" style="left:604.5px;top:317.5px;font-size:8.2px;font-weight:bold;color:#111;white-space:nowrap;line-height:12px">Space Tablespace Used % Overview</div>
<svg style="left:1295px;top:319px" width="34" height="9" viewBox="0 0 34 9"><path d="M0.4 0.4 L7.6 7.6 M7.6 0.4 L0.4 7.6" stroke="#7d8898" stroke-width="0.95"/><rect x="13.3" y="0.9" width="5.6" height="6.2" rx="0.6" fill="none" stroke="#7d8898" stroke-width="1.05"/><path d="M31.3 2.6 A3.2 3.2 0 1 0 31.6 4.9" stroke="#7d8898" stroke-width="1.05" fill="none"/><path d="M30.2 3.3 L33 3.3 L31.6 5.6 Z" fill="#7d8898"/></svg>
<svg style="left:1321px;top:598px" width="7" height="7" viewBox="0 0 7 7"><path d="M6.5 1 L1 6.5 M6.5 3.5 L3.5 6.5 M6.5 5.5 L5.5 6.5" stroke="#bbb" stroke-width="0.8"/></svg>
<svg style="left:0;top:0" width="1350" height="668" viewBox="0 0 1350 668"><line x1="657.2" y1="355" x2="1202.4" y2="355" stroke="#666" stroke-width="1.1"/><line x1="1202.4" y1="355" x2="1202.4" y2="551.4" stroke="#555" stroke-width="1.1"/><line x1="657.2" y1="451.7" x2="1202.4" y2="451.7" stroke="#666" stroke-width="1.1"/><line x1="657.2" y1="355" x2="657.2" y2="548.4" stroke="#888" stroke-width="1.3"/><line x1="653.2" y1="548.4" x2="1202.4" y2="548.4" stroke="#999" stroke-width="1.1"/><line x1="653.2" y1="355" x2="657.2" y2="355" stroke="#888" stroke-width="1.1"/><line x1="653.2" y1="451.7" x2="657.2" y2="451.7" stroke="#888" stroke-width="1.1"/><line x1="1185.6" y1="355" x2="1185.6" y2="548.4" stroke="#888" stroke-width="0.8" stroke-dasharray="1.2,1.2"/><text x="652" y="359" text-anchor="end" font-family="Liberation Sans" font-size="9.3" fill="#444">100.00</text><text x="652" y="455.2" text-anchor="end" font-family="Liberation Sans" font-size="9.3" fill="#444">50.00</text><text x="652" y="551.9" text-anchor="end" font-family="Liberation Sans" font-size="9.3" fill="#444">0.00</text><text x="656.8" y="347" font-family="Liberation Sans" font-size="9.3" fill="#444">02/21/2023 09:00:00 AM</text><text x="1202.4" y="347" text-anchor="end" font-family="Liberation Sans" font-size="9.3" fill="#444">02/22/2023 05:00:00 AM</text><text transform="translate(605,452) rotate(-90)" text-anchor="middle" font-family="Liberation Sans" font-size="8" fill="#444">%</text><text transform="translate(680.5,572) rotate(-90)" font-family="Liberation Sans" font-size="9" fill="#333" textLength="9.3" lengthAdjust="spacingAndGlyphs">09</text><text transform="translate(706.7789473684211,572) rotate(-90)" font-family="Liberation Sans" font-size="9" fill="#333" textLength="9.3" lengthAdjust="spacingAndGlyphs">10</text><text transform="translate(733.0578947368421,572) rotate(-90)" font-family="Liberation Sans" font-size="9" fill="#333" textLength="9.3" lengthAdjust="spacingAndGlyphs">11</text><text transform="translate(759.3368421052631,572) rotate(-90)" font-family="Liberation Sans" font-size="9" fill="#333" textLength="9.3" lengthAdjust="spacingAndGlyphs">12</text><text transform="translate(785.6157894736842,572) rotate(-90)" font-family="Liberation Sans" font-size="9" fill="#333" textLength="9.3" lengthAdjust="spacingAndGlyphs">13</text><text transform="translate(811.8947368421052,572) rotate(-90)" font-family="Liberation Sans" font-size="9" fill="#333" textLength="9.3" lengthAdjust="spacingAndGlyphs">14</text><text transform="translate(838.1736842105263,572) rotate(-90)" font-family="Liberation Sans" font-size="9" fill="#333" textLength="9.3" lengthAdjust="spacingAndGlyphs">15</text><text transform="translate(864.4526315789474,572) rotate(-90)" font-family="Liberation Sans" font-size="9" fill="#333" textLength="9.3" lengthAdjust="spacingAndGlyphs">16</text><text transform="translate(890.7315789473685,572) rotate(-90)" font-family="Liberation Sans" font-size="9" fill="#333" textLength="9.3" lengthAdjust="spacingAndGlyphs">17</text><text transform="translate(917.0105263157894,572) rotate(-90)" font-family="Liberation Sans" font-size="9" fill="#333" textLength="9.3" lengthAdjust="spacingAndGlyphs">18</text><text transform="translate(943.2894736842105,572) rotate(-90)" font-family="Liberation Sans" font-size="9" fill="#333" textLength="9.3" lengthAdjust="spacingAndGlyphs">19</text><text transform="translate(969.5684210526315,572) rotate(-90)" font-family="Liberation Sans" font-size="9" fill="#333" textLength="9.3" lengthAdjust="spacingAndGlyphs">20</text><text transform="translate(995.8473684210526,572) rotate(-90)" font-family="Liberation Sans" font-size="9" fill="#333" textLength="9.3" lengthAdjust="spacingAndGlyphs">21</text><text transform="translate(1022.1263157894737,572) rotate(-90)" font-family="Liberation Sans" font-size="9" fill="#333" textLength="9.3" lengthAdjust="spacingAndGlyphs">22</text><text transform="translate(1048.4052631578948,572) rotate(-90)" font-family="Liberation Sans" font-size="9" fill="#333" textLength="9.3" lengthAdjust="spacingAndGlyphs">23</text><text transform="translate(1074.6842105263158,572) rotate(-90)" font-family="Liberation Sans" font-size="9" fill="#333" textLength="9.3" lengthAdjust="spacingAndGlyphs">00</text><text transform="translate(1100.9631578947367,572) rotate(-90)" font-family="Liberation Sans" font-size="9" fill="#333" textLength="9.3" lengthAdjust="spacingAndGlyphs">01</text><text transform="translate(1127.2421052631578,572) rotate(-90)" font-family="Liberation Sans" font-size="9" fill="#333" textLength="9.3" lengthAdjust="spacingAndGlyphs">02</text><text transform="translate(1153.5210526315789,572) rotate(-90)" font-family="Liberation Sans" font-size="9" fill="#333" textLength="9.3" lengthAdjust="spacingAndGlyphs">03</text><text transform="translate(1179.8,572) rotate(-90)" font-family="Liberation Sans" font-size="9" fill="#333" textLength="9.3" lengthAdjust="spacingAndGlyphs">04</text><text transform="translate(1206.078947368421,572) rotate(-90)" font-family="Liberation Sans" font-size="9" fill="#333" textLength="9.3" lengthAdjust="spacingAndGlyphs">05</text><polyline points="676.20,548.01 702.48,548.01 728.76,548.01 755.04,548.01 781.32,548.01 807.59,548.01 833.87,548.01 860.15,548.01 886.43,548.01 912.71,548.01 938.99,548.01 965.27,548.01 991.55,548.01 1017.83,548.01 1044.11,548.01 1070.38,548.01 1096.66,548.01 1122.94,548.01 1149.22,548.01 1175.50,548.01" stroke="#7a5010" stroke-width="1.6" fill="none"/><circle cx="676.20" cy="548.01" r="2.5" fill="#5a3a08"/><circle cx="702.48" cy="548.01" r="2.5" fill="#5a3a08"/><circle cx="728.76" cy="548.01" r="2.5" fill="#5a3a08"/><circle cx="755.04" cy="548.01" r="2.5" fill="#5a3a08"/><circle cx="781.32" cy="548.01" r="2.5" fill="#5a3a08"/><circle cx="807.59" cy="548.01" r="2.5" fill="#5a3a08"/><circle cx="833.87" cy="548.01" r="2.5" fill="#5a3a08"/><circle cx="860.15" cy="548.01" r="2.5" fill="#5a3a08"/><circle cx="886.43" cy="548.01" r="2.5" fill="#5a3a08"/><circle cx="912.71" cy="548.01" r="2.5" fill="#5a3a08"/><circle cx="938.99" cy="548.01" r="2.5" fill="#5a3a08"/><circle cx="965.27" cy="548.01" r="2.5" fill="#5a3a08"/><circle cx="991.55" cy="548.01" r="2.5" fill="#5a3a08"/><circle cx="1017.83" cy="548.01" r="2.5" fill="#5a3a08"/><circle cx="1044.11" cy="548.01" r="2.5" fill="#5a3a08"/><circle cx="1070.38" cy="548.01" r="2.5" fill="#5a3a08"/><circle cx="1096.66" cy="548.01" r="2.5" fill="#5a3a08"/><circle cx="1122.94" cy="548.01" r="2.5" fill="#5a3a08"/><circle cx="1149.22" cy="548.01" r="2.5" fill="#5a3a08"/><circle cx="1175.50" cy="548.01" r="2.5" fill="#5a3a08"/><polyline points="676.20,548.40 702.48,548.40 728.76,548.40 755.04,548.40 781.32,548.40 807.59,548.40 833.87,548.40 860.15,548.40 886.43,548.40 912.71,548.40 938.99,548.40 965.27,548.40 991.55,548.40 1017.83,548.40 1044.11,548.40 1070.38,548.40 1096.66,548.40 1122.94,548.40 1149.22,548.40 1175.50,548.40" stroke="#8a3a20" stroke-width="1.6" fill="none"/><circle cx="676.20" cy="548.40" r="2.5" fill="#7a2a60"/><circle cx="702.48" cy="548.40" r="2.5" fill="#7a2a60"/><circle cx="728.76" cy="548.40" r="2.5" fill="#7a2a60"/><circle cx="755.04" cy="548.40" r="2.5" fill="#7a2a60"/><circle cx="781.32" cy="548.40" r="2.5" fill="#7a2a60"/><circle cx="807.59" cy="548.40" r="2.5" fill="#7a2a60"/><circle cx="833.87" cy="548.40" r="2.5" fill="#7a2a60"/><circle cx="860.15" cy="548.40" r="2.5" fill="#7a2a60"/><circle cx="886.43" cy="548.40" r="2.5" fill="#7a2a60"/><circle cx="912.71" cy="548.40" r="2.5" fill="#7a2a60"/><circle cx="938.99" cy="548.40" r="2.5" fill="#7a2a60"/><circle cx="965.27" cy="548.40" r="2.5" fill="#7a2a60"/><circle cx="991.55" cy="548.40" r="2.5" fill="#7a2a60"/><circle cx="1017.83" cy="548.40" r="2.5" fill="#7a2a60"/><circle cx="1044.11" cy="548.40" r="2.5" fill="#7a2a60"/><circle cx="1070.38" cy="548.40" r="2.5" fill="#7a2a60"/><circle cx="1096.66" cy="548.40" r="2.5" fill="#7a2a60"/><circle cx="1122.94" cy="548.40" r="2.5" fill="#7a2a60"/><circle cx="1149.22" cy="548.40" r="2.5" fill="#7a2a60"/><circle cx="1175.50" cy="548.40" r="2.5" fill="#7a2a60"/><polyline points="676.20,547.72 702.48,547.72 728.76,547.72 755.04,547.72 781.32,547.72 807.59,547.72 833.87,547.72 860.15,547.72 886.43,547.72 912.71,547.72 938.99,547.72 965.27,547.72 991.55,547.72 1017.83,547.72 1044.11,547.72 1070.38,547.72 1096.66,547.72 1122.94,547.72 1149.22,547.72 1175.50,547.72" stroke="#3a8a10" stroke-width="1.6" fill="none"/><circle cx="676.20" cy="547.72" r="2.5" fill="#3d7a10"/><circle cx="702.48" cy="547.72" r="2.5" fill="#3d7a10"/><circle cx="728.76" cy="547.72" r="2.5" fill="#3d7a10"/><circle cx="755.04" cy="547.72" r="2.5" fill="#3d7a10"/><circle cx="781.32" cy="547.72" r="2.5" fill="#3d7a10"/><circle cx="807.59" cy="547.72" r="2.5" fill="#3d7a10"/><circle cx="833.87" cy="547.72" r="2.5" fill="#3d7a10"/><circle cx="860.15" cy="547.72" r="2.5" fill="#3d7a10"/><circle cx="886.43" cy="547.72" r="2.5" fill="#3d7a10"/><circle cx="912.71" cy="547.72" r="2.5" fill="#3d7a10"/><circle cx="938.99" cy="547.72" r="2.5" fill="#3d7a10"/><circle cx="965.27" cy="547.72" r="2.5" fill="#3d7a10"/><circle cx="991.55" cy="547.72" r="2.5" fill="#3d7a10"/><circle cx="1017.83" cy="547.72" r="2.5" fill="#3d7a10"/><circle cx="1044.11" cy="547.72" r="2.5" fill="#3d7a10"/><circle cx="1070.38" cy="547.72" r="2.5" fill="#3d7a10"/><circle cx="1096.66" cy="547.72" r="2.5" fill="#3d7a10"/><circle cx="1122.94" cy="547.72" r="2.5" fill="#3d7a10"/><circle cx="1149.22" cy="547.72" r="2.5" fill="#3d7a10"/><circle cx="1175.50" cy="547.72" r="2.5" fill="#3d7a10"/><polyline points="676.20,536.22 702.48,536.22 728.76,536.22 755.04,536.22 781.32,536.22 807.59,536.22 833.87,536.22 860.15,536.22 886.43,536.22 912.71,536.22 938.99,536.22 965.27,536.22 991.55,536.22 1017.83,536.22 1044.11,536.22 1070.38,536.22 1096.66,536.22 1122.94,536.22 1149.22,536.22 1175.50,536.22" stroke="#9a7840" stroke-width="1.6" fill="none"/><circle cx="676.20" cy="536.22" r="2.5" fill="#5a3a08"/><circle cx="702.48" cy="536.22" r="2.5" fill="#5a3a08"/><circle cx="728.76" cy="536.22" r="2.5" fill="#5a3a08"/><circle cx="755.04" cy="536.22" r="2.5" fill="#5a3a08"/><circle cx="781.32" cy="536.22" r="2.5" fill="#5a3a08"/><circle cx="807.59" cy="536.22" r="2.5" fill="#5a3a08"/><circle cx="833.87" cy="536.22" r="2.5" fill="#5a3a08"/><circle cx="860.15" cy="536.22" r="2.5" fill="#5a3a08"/><circle cx="886.43" cy="536.22" r="2.5" fill="#5a3a08"/><circle cx="912.71" cy="536.22" r="2.5" fill="#5a3a08"/><circle cx="938.99" cy="536.22" r="2.5" fill="#5a3a08"/><circle cx="965.27" cy="536.22" r="2.5" fill="#5a3a08"/><circle cx="991.55" cy="536.22" r="2.5" fill="#5a3a08"/><circle cx="1017.83" cy="536.22" r="2.5" fill="#5a3a08"/><circle cx="1044.11" cy="536.22" r="2.5" fill="#5a3a08"/><circle cx="1070.38" cy="536.22" r="2.5" fill="#5a3a08"/><circle cx="1096.66" cy="536.22" r="2.5" fill="#5a3a08"/><circle cx="1122.94" cy="536.22" r="2.5" fill="#5a3a08"/><circle cx="1149.22" cy="536.22" r="2.5" fill="#5a3a08"/><circle cx="1175.50" cy="536.22" r="2.5" fill="#5a3a08"/><polyline points="676.20,519.97 702.48,519.97 728.76,519.97 755.04,519.97 781.32,519.97 807.59,519.97 833.87,519.97 860.15,519.97 886.43,519.97 912.71,519.97 938.99,519.97 965.27,519.97 991.55,519.97 1017.83,519.97 1044.11,519.97 1070.38,519.97 1096.66,519.97 1122.94,520.77 1149.22,520.77 1175.50,520.77" stroke="#8a40d0" stroke-width="1.6" fill="none"/><circle cx="676.20" cy="519.97" r="2.5" fill="#5a0aa0"/><circle cx="702.48" cy="519.97" r="2.5" fill="#5a0aa0"/><circle cx="728.76" cy="519.97" r="2.5" fill="#5a0aa0"/><circle cx="755.04" cy="519.97" r="2.5" fill="#5a0aa0"/><circle cx="781.32" cy="519.97" r="2.5" fill="#5a0aa0"/><circle cx="807.59" cy="519.97" r="2.5" fill="#5a0aa0"/><circle cx="833.87" cy="519.97" r="2.5" fill="#5a0aa0"/><circle cx="860.15" cy="519.97" r="2.5" fill="#5a0aa0"/><circle cx="886.43" cy="519.97" r="2.5" fill="#5a0aa0"/><circle cx="912.71" cy="519.97" r="2.5" fill="#5a0aa0"/><circle cx="938.99" cy="519.97" r="2.5" fill="#5a0aa0"/><circle cx="965.27" cy="519.97" r="2.5" fill="#5a0aa0"/><circle cx="991.55" cy="519.97" r="2.5" fill="#5a0aa0"/><circle cx="1017.83" cy="519.97" r="2.5" fill="#5a0aa0"/><circle cx="1044.11" cy="519.97" r="2.5" fill="#5a0aa0"/><circle cx="1070.38" cy="519.97" r="2.5" fill="#5a0aa0"/><circle cx="1096.66" cy="519.97" r="2.5" fill="#5a0aa0"/><circle cx="1122.94" cy="520.77" r="2.5" fill="#5a0aa0"/><circle cx="1149.22" cy="520.77" r="2.5" fill="#5a0aa0"/><circle cx="1175.50" cy="520.77" r="2.5" fill="#5a0aa0"/><polyline points="676.20,495.02 702.48,495.02 728.76,495.02 755.04,495.02 781.32,495.02 807.59,495.02 833.87,495.02 860.15,495.02 886.43,495.02 912.71,495.02 938.99,495.02 965.27,495.02 991.55,495.02 1017.83,495.02 1044.11,495.02 1070.38,495.02 1096.66,495.02 1122.94,495.02 1149.22,495.02 1175.50,495.02" stroke="#40ff40" stroke-width="1.6" fill="none"/><circle cx="676.20" cy="495.02" r="2.5" fill="#20e020"/><circle cx="702.48" cy="495.02" r="2.5" fill="#20e020"/><circle cx="728.76" cy="495.02" r="2.5" fill="#20e020"/><circle cx="755.04" cy="495.02" r="2.5" fill="#20e020"/><circle cx="781.32" cy="495.02" r="2.5" fill="#20e020"/><circle cx="807.59" cy="495.02" r="2.5" fill="#20e020"/><circle cx="833.87" cy="495.02" r="2.5" fill="#20e020"/><circle cx="860.15" cy="495.02" r="2.5" fill="#20e020"/><circle cx="886.43" cy="495.02" r="2.5" fill="#20e020"/><circle cx="912.71" cy="495.02" r="2.5" fill="#20e020"/><circle cx="938.99" cy="495.02" r="2.5" fill="#20e020"/><circle cx="965.27" cy="495.02" r="2.5" fill="#20e020"/><circle cx="991.55" cy="495.02" r="2.5" fill="#20e020"/><circle cx="1017.83" cy="495.02" r="2.5" fill="#20e020"/><circle cx="1044.11" cy="495.02" r="2.5" fill="#20e020"/><circle cx="1070.38" cy="495.02" r="2.5" fill="#20e020"/><circle cx="1096.66" cy="495.02" r="2.5" fill="#20e020"/><circle cx="1122.94" cy="495.02" r="2.5" fill="#20e020"/><circle cx="1149.22" cy="495.02" r="2.5" fill="#20e020"/><circle cx="1175.50" cy="495.02" r="2.5" fill="#20e020"/><polyline points="676.20,493.67 702.48,493.67 728.76,493.67 755.04,493.67 781.32,493.67 807.59,493.67 833.87,493.67 860.15,493.67 886.43,493.67 912.71,493.67 938.99,493.67 965.27,493.67 991.55,493.67 1017.83,493.67 1044.11,493.67 1070.38,493.67 1096.66,493.67 1122.94,493.67 1149.22,493.67 1175.50,493.67" stroke="#e01020" stroke-width="1.6" fill="none"/><circle cx="676.20" cy="493.67" r="2.5" fill="#e0001a"/><circle cx="702.48" cy="493.67" r="2.5" fill="#e0001a"/><circle cx="728.76" cy="493.67" r="2.5" fill="#e0001a"/><circle cx="755.04" cy="493.67" r="2.5" fill="#e0001a"/><circle cx="781.32" cy="493.67" r="2.5" fill="#e0001a"/><circle cx="807.59" cy="493.67" r="2.5" fill="#e0001a"/><circle cx="833.87" cy="493.67" r="2.5" fill="#e0001a"/><circle cx="860.15" cy="493.67" r="2.5" fill="#e0001a"/><circle cx="886.43" cy="493.67" r="2.5" fill="#e0001a"/><circle cx="912.71" cy="493.67" r="2.5" fill="#e0001a"/><circle cx="938.99" cy="493.67" r="2.5" fill="#e0001a"/><circle cx="965.27" cy="493.67" r="2.5" fill="#e0001a"/><circle cx="991.55" cy="493.67" r="2.5" fill="#e0001a"/><circle cx="1017.83" cy="493.67" r="2.5" fill="#e0001a"/><circle cx="1044.11" cy="493.67" r="2.5" fill="#e0001a"/><circle cx="1070.38" cy="493.67" r="2.5" fill="#e0001a"/><circle cx="1096.66" cy="493.67" r="2.5" fill="#e0001a"/><circle cx="1122.94" cy="493.67" r="2.5" fill="#e0001a"/><circle cx="1149.22" cy="493.67" r="2.5" fill="#e0001a"/><circle cx="1175.50" cy="493.67" r="2.5" fill="#e0001a"/><rect x="1252.5" y="415.60" width="13.4" height="11.4" rx="3" fill="#00ff00"/><text x="1275.8" y="425.30" font-family="Liberation Sans" font-size="9.2" fill="#333" textLength="33.6" lengthAdjust="spacingAndGlyphs">PSAPSR3</text><rect x="1252.5" y="429.80" width="13.4" height="11.4" rx="3" fill="#e3001b"/><text x="1275.8" y="439.50" font-family="Liberation Sans" font-size="9.2" fill="#333" textLength="48" lengthAdjust="spacingAndGlyphs">PSAPSR3750</text><rect x="1252.5" y="444.00" width="13.4" height="11.4" rx="3" fill="#1fbf1f"/><text x="1275.8" y="453.70" font-family="Liberation Sans" font-size="9.2" fill="#333" textLength="49" lengthAdjust="spacingAndGlyphs">PSAPSR3USR</text><rect x="1252.5" y="458.20" width="13.4" height="11.4" rx="3" fill="#8e0a6b"/><text x="1275.8" y="467.90" font-family="Liberation Sans" font-size="9.2" fill="#333" textLength="40.6" lengthAdjust="spacingAndGlyphs">PSAPTEMP</text><rect x="1252.5" y="472.40" width="13.4" height="11.4" rx="3" fill="#3f7d0f"/><text x="1275.8" y="482.10" font-family="Liberation Sans" font-size="9.2" fill="#333" textLength="44" lengthAdjust="spacingAndGlyphs">PSAPUNDO</text><rect x="1252.5" y="486.60" width="13.4" height="11.4" rx="3" fill="#5b0aa3"/><text x="1275.8" y="496.30" font-family="Liberation Sans" font-size="9.2" fill="#333" textLength="29.8" lengthAdjust="spacingAndGlyphs">SYSAUX</text><rect x="1252.5" y="500.80" width="13.4" height="11.4" rx="3" fill="#5f400a"/><text x="1275.8" y="510.50" font-family="Liberation Sans" font-size="9.2" fill="#333" textLength="29.8" lengthAdjust="spacingAndGlyphs">SYSTEM</text><path d="M1173.5 353 L1173.5 364 L1176 361.5 L1178 366 L1179.5 365.3 L1177.5 361 L1181 361 Z" fill="#fff" stroke="#666" stroke-width="0.7"/></svg>
<svg style="left:0;top:0" width="1350" height="668" viewBox="0 0 1350 668"><defs><filter id="sh" x="-20%" y="-50%" width="140%" height="200%"><feGaussianBlur in="SourceAlpha" stdDeviation="1"/><feOffset dx="1" dy="2"/><feComponentTransfer><feFuncA type="linear" slope="0.35"/></feComponentTransfer><feMerge><feMergeNode/><feMergeNode in="SourceGraphic"/></feMerge></filter></defs><g filter="url(#sh)"><line x1="407.7" y1="80.2" x2="489.19" y2="62.13" stroke="#e8141c" stroke-width="2" stroke-linecap="round"/><path d="M497 60.4 L488.02 66.08 L486.46 59.05 Z" fill="#e8141c"/></g><g filter="url(#sh)"><line x1="305.2" y1="390.7" x2="578.53" y2="365.24" stroke="#e8141c" stroke-width="2" stroke-linecap="round"/><path d="M586.5 364.5 L576.88 369.01 L576.21 361.84 Z" fill="#e8141c"/></g></svg>
<div class="a" style="left:0;top:666px;width:1120px;height:2px;background:linear-gradient(#cfcfcf,#e6e6e6)"></div>
</body></html>
